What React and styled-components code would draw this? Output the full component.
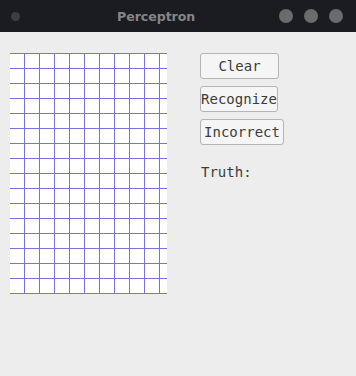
import React from "react";
import styled, { createGlobalStyle } from "styled-components";

const GRID_COLS = 10;
const GRID_ROWS = 17;
const CELL = 15;

const GlobalStyle = createGlobalStyle`
  html, body {
    margin: 0;
    padding: 0;
    background: #ededed;
  }
`;

const App = () => {
  return (
    <>
      <GlobalStyle />
      <Window>
        <TitleBar>
          <MenuDot />
          <Title>Perceptron</Title>
          <Controls>
            <ControlDot />
            <ControlDot />
            <ControlDot />
          </Controls>
        </TitleBar>
        <Body>
          <Canvas width="157" height="241" shapeRendering="crispEdges">
            <rect x="0" y="0" width="157" height="241" fill="#ffffff" />
            {Array.from({ length: GRID_COLS }).map((_, i) => (
              <line
                key={`v${i}`}
                x1={14.5 + i * CELL}
                x2={14.5 + i * CELL}
                y1="0"
                y2="241"
                stroke="#7a71de"
                strokeWidth="1"
              />
            ))}
            {Array.from({ length: GRID_ROWS }).map((_, i) => (
              <line
                key={`h${i}`}
                x1="0"
                x2="157"
                y1={0.5 + i * CELL}
                y2={0.5 + i * CELL}
                stroke="#7a71de"
                strokeWidth="1"
              />
            ))}
          </Canvas>
          <Side>
            <Button $width={79}>Clear</Button>
            <Button $width={78}>Recognize</Button>
            <Button $width={84}>Incorrect</Button>
            <Truth>Truth:</Truth>
          </Side>
        </Body>
      </Window>
    </>
  );
};

const Window = styled.div`
  width: 356px;
  height: 376px;
  background: #ededed;
  overflow: hidden;
`;

const TitleBar = styled.div`
  display: flex;
  align-items: center;
  height: 32px;
  padding: 0 13px 0 11px;
  background: #1b1c21;
  box-sizing: border-box;
`;

const MenuDot = styled.div`
  width: 9px;
  height: 9px;
  border-radius: 50%;
  background: #3d3e43;
`;

const Title = styled.div`
  margin-left: 97px;
  color: #868686;
  font-family: "DejaVu Sans", sans-serif;
  font-weight: bold;
  font-size: 12.5px;
`;

const Controls = styled.div`
  display: flex;
  gap: 11px;
  margin-left: auto;
`;

const ControlDot = styled.div`
  width: 14px;
  height: 14px;
  border-radius: 50%;
  background: #6b6b6b;
`;

const Body = styled.div`
  display: flex;
  align-items: flex-start;
  padding: 21px 0 0 10px;
`;

const Canvas = styled.svg`
  display: block;
  flex-shrink: 0;
`;

const Side = styled.div`
  display: flex;
  flex-direction: column;
  align-items: flex-start;
  gap: 7px;
  margin-left: 33px;
`;

const Button = styled.button`
  width: ${({ $width }) => $width}px;
  height: 26px;
  padding: 0;
  border: 1px solid #b4b4b4;
  border-radius: 3px;
  background: #f5f5f5;
  color: #3c3c3c;
  font-family: "DejaVu Sans Mono", monospace;
  font-size: 14px;
  text-align: center;
`;

const Truth = styled.div`
  margin-top: 12px;
  margin-left: 1px;
  color: #3c3c3c;
  font-family: "DejaVu Sans Mono", monospace;
  font-size: 14px;
`;

export default App;
